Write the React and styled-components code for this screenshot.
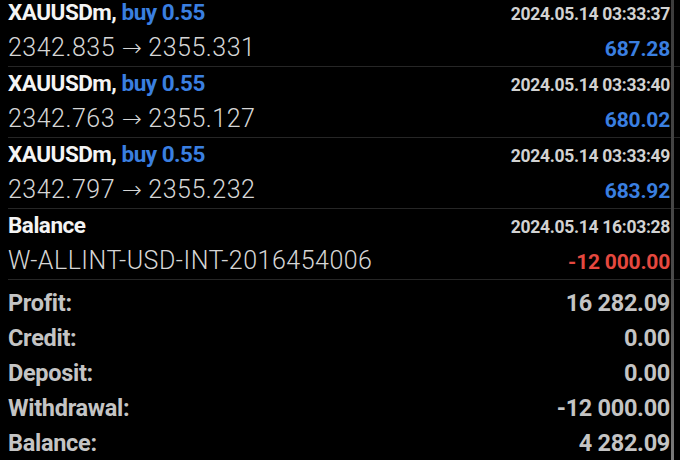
import React from "react";
import styled, { createGlobalStyle } from "styled-components";

const Global = createGlobalStyle`
  html, body { margin: 0; padding: 0; background: #000; }
  body { width: 680px; height: 460px; overflow: hidden; font-family: Roboto, "Liberation Sans", sans-serif; }
`;

const Screen = styled.div`
  position: relative;
  width: 680px;
  height: 460px;
  overflow: hidden;
  background: #000;
`;

const List = styled.div`
  margin-top: -4px;
  display: flex;
  flex-direction: column;
`;

const Row = styled.div`
  margin-left: 8px;
  padding-right: 10px;
  border-bottom: 1px solid #262626;
  display: flex;
  flex-direction: column;
`;

const Line = styled.div`
  display: flex;
  justify-content: space-between;
  align-items: baseline;
  height: ${(p) => p.$h}px;
  line-height: ${(p) => p.$h}px;
  white-space: nowrap;
`;

const Title = styled.span`
  font-size: 22.5px;
  font-weight: 700;
  color: #f4f4f4;
  letter-spacing: -0.5px;
`;

const Action = styled.span`
  color: #3a7fe0;
`;

const Stamp = styled.span`
  font-size: 17.5px;
  font-weight: 700;
  color: #d2d2d2;
  letter-spacing: -0.3px;
`;

const Detail = styled.span`
  font-size: 25px;
  font-weight: 300;
  color: #d6d6d6;
  letter-spacing: 0.5px;
`;

const Arrow = styled.span`
  display: inline-block;
  font-family: "DejaVu Sans", sans-serif;
  font-weight: 200;
  font-size: 24px;
  letter-spacing: 0;
`;

const Amount = styled.span`
  font-size: 21px;
  font-weight: 700;
  color: ${(p) => (p.$neg ? "#e5483f" : "#3a7fe0")};
  letter-spacing: -0.2px;
`;

const Summary = styled.div`
  padding: 6px 10px 0 8px;
  display: flex;
  flex-direction: column;
`;

const SumRow = styled.div`
  display: flex;
  justify-content: space-between;
  height: 35px;
  line-height: 35px;
  font-size: 23.5px;
  font-weight: 700;
  color: #c4c4c4;
  letter-spacing: -0.3px;
`;

const ScrollBar = styled.div`
  position: absolute;
  right: 6px;
  top: 0;
  width: 3px;
  height: 460px;
  background: linear-gradient(to bottom, #3c3c3c 0%, #4a4a4a 60%, #7a7a7a 100%);
`;

const deals = [
  { t: "2024.05.14 03:33:37", a: "2342.835", b: "2355.331", v: "687.28" },
  { t: "2024.05.14 03:33:40", a: "2342.763", b: "2355.127", v: "680.02" },
  { t: "2024.05.14 03:33:49", a: "2342.797", b: "2355.232", v: "683.92" },
];

const summary = [
  ["Profit:", "16 282.09"],
  ["Credit:", "0.00"],
  ["Deposit:", "0.00"],
  ["Withdrawal:", "-12 000.00"],
  ["Balance:", "4 282.09"],
];

export default function App() {
  return (
    <Screen>
      <Global />
      <List>
        {deals.map((d) => (
          <Row key={d.t}>
            <Line $h={33}>
              <Title>
                XAUUSDm, <Action>buy 0.55</Action>
              </Title>
              <Stamp>{d.t}</Stamp>
            </Line>
            <Line $h={37}>
              <Detail>
                {d.a} <Arrow>→</Arrow> {d.b}
              </Detail>
              <Amount>{d.v}</Amount>
            </Line>
          </Row>
        ))}
        <Row>
          <Line $h={33}>
            <Title>Balance</Title>
            <Stamp>2024.05.14 16:03:28</Stamp>
          </Line>
          <Line $h={37}>
            <Detail>W-ALLINT-USD-INT-2016454006</Detail>
            <Amount $neg>-12 000.00</Amount>
          </Line>
        </Row>
      </List>
      <Summary>
        {summary.map(([k, v]) => (
          <SumRow key={k}>
            <span>{k}</span>
            <span>{v}</span>
          </SumRow>
        ))}
      </Summary>
      <ScrollBar />
    </Screen>
  );
}
